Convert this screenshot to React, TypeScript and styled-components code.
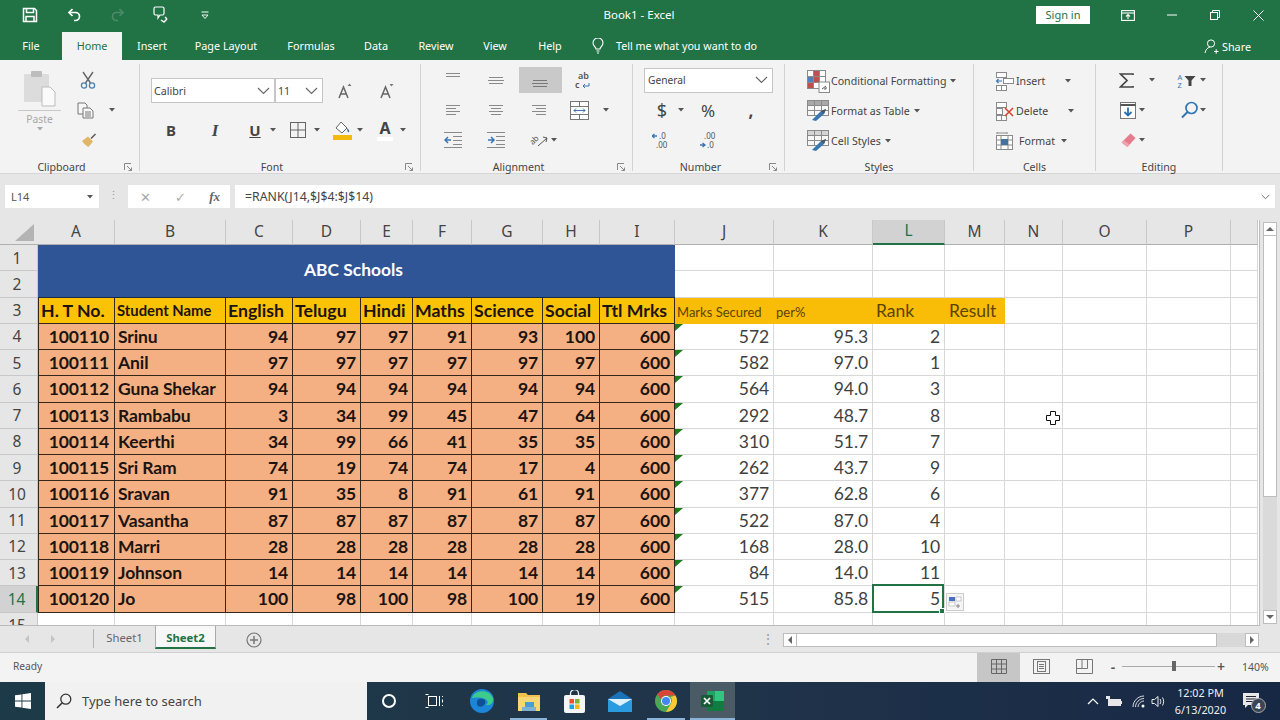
import React from "react";
import styled, { createGlobalStyle } from "styled-components";

const UI = `"Noto Sans", "Open Sans", sans-serif`;
const SHEET = `Lato, "Open Sans", sans-serif`;
const GREEN = "#217346";

const Global = createGlobalStyle`
  html, body { margin: 0; padding: 0; background: #f3f3f3; }
  * { box-sizing: border-box; }
`;

const Page = styled.div`
  width: 1280px;
  height: 720px;
  overflow: hidden;
  display: flex;
  flex-direction: column;
  font-family: ${UI};
  color: #444;
`;

/* positioned-by-centre row used for the small toolbar icons */
const ToolRow = styled.div<{ $h?: number }>`
  display: flex;
  align-items: center;
  height: ${(p) => p.$h ?? 30}px;
`;
const Slot = styled.div<{ $w: number; $ml: number }>`
  flex: none;
  width: ${(p) => p.$w}px;
  margin-left: ${(p) => p.$ml}px;
  display: flex;
  align-items: center;
  justify-content: center;
`;
type Item = [number, number, React.ReactNode];
function Tools({ from, items, h }: { from: number; items: Item[]; h?: number }) {
  let x = from;
  return (
    <ToolRow $h={h}>
      {items.map(([c, w, node], i) => {
        const ml = c - w / 2 - x;
        x = c + w / 2;
        return (
          <Slot key={i} $w={w} $ml={ml}>
            {node}
          </Slot>
        );
      })}
    </ToolRow>
  );
}

/* ---------- icons ---------- */
const Caret = ({ c = "#555" }: { c?: string }) => (
  <svg width="6" height="4" viewBox="0 0 6 4">
    <path d="M0 0h6L3 3.5z" fill={c} />
  </svg>
);
const Chevron = ({ w = 13, c = "#666" }: { w?: number; c?: string }) => (
  <svg width={w} height="8" viewBox="0 0 13 8">
    <path d="M1 1l5.5 5.5L12 1" fill="none" stroke={c} strokeWidth="1.1" />
  </svg>
);
const ChevronUp = () => (
  <svg width="11" height="7" viewBox="0 0 11 7">
    <path d="M0.5 6L5.5 1l5 5" fill="none" stroke="#777" strokeWidth="1" />
  </svg>
);
const SaveIcon = () => (
  <svg width="16" height="16" viewBox="0 0 16 16" fill="none" stroke="#fff" strokeWidth="1.5">
    <path d="M1.5 1.5h11l2 2v11h-13z" />
    <path d="M4.5 1.5v4h7v-4M4 14.5v-5h8v5" />
  </svg>
);
const UndoIcon = ({ c = "#fff", flip = false }: { c?: string; flip?: boolean }) => (
  <svg width="15" height="14" viewBox="0 0 15 14" fill="none" stroke={c} strokeWidth="1.7" style={flip ? { transform: "scaleX(-1)" } : undefined}>
    <path d="M5.5 1L2 4.5 5.5 8" />
    <path d="M2.5 4.5h6a4 4 0 0 1 0 8H7" />
  </svg>
);
const TouchIcon = () => (
  <svg width="18" height="18" viewBox="0 0 18 18" fill="none" stroke="#fff" strokeWidth="1.2">
    <path d="M2 2.5A1.5 1.5 0 0 1 3.5 1h7A1.5 1.5 0 0 1 12 2.5v5A1.5 1.5 0 0 1 10.5 9H8l-2 3V9H3.5A1.5 1.5 0 0 1 2 7.5z" />
    <path d="M9 14l3 2 3-3M13 11l2 2" strokeWidth="1.5" />
  </svg>
);
const QatIcon = () => (
  <svg width="8" height="9" viewBox="0 0 8 9">
    <path d="M0.5 1h7" stroke="#fff" strokeWidth="1" />
    <path d="M1 4h6L4 7.5z" fill="none" stroke="#fff" strokeWidth="0.9" />
  </svg>
);
const RibbonDisplayIcon = () => (
  <svg width="14" height="11" viewBox="0 0 14 11" fill="none" stroke="#fff" strokeWidth="1.1">
    <rect x="0.6" y="0.6" width="12.8" height="9.8" />
    <path d="M0.6 3h12.8" />
    <path d="M7 9V4.5M5 6.5l2-2 2 2" />
  </svg>
);
const MinIcon = () => (
  <svg width="10" height="2" viewBox="0 0 10 2">
    <path d="M0 1h10" stroke="#fff" />
  </svg>
);
const RestoreIcon = () => (
  <svg width="10" height="10" viewBox="0 0 10 10" fill="none" stroke="#fff">
    <rect x="0.5" y="2.5" width="7" height="7" />
    <path d="M2.5 2.5v-2h7v7h-2" />
  </svg>
);
const CloseIcon = () => (
  <svg width="11" height="11" viewBox="0 0 11 11" stroke="#fff" strokeWidth="1">
    <path d="M0.5 0.5l10 10M10.5 0.5l-10 10" />
  </svg>
);
const BulbIcon = () => (
  <svg width="12" height="16" viewBox="0 0 12 16" fill="none" stroke="#fff" strokeWidth="1.1">
    <path d="M4 11c0-2-3-3-3-6a5 5 0 0 1 10 0c0 3-3 4-3 6z" />
    <path d="M4.5 13h3M5 15h2" />
  </svg>
);
const ShareIcon = () => (
  <svg width="15" height="15" viewBox="0 0 15 15" fill="none" stroke="#fff" strokeWidth="1">
    <circle cx="7" cy="4.5" r="3.6" />
    <path d="M1 14c.5-3 2.5-5.5 5-6M10 12.5h4.5M12.2 10.2v4.6" />
  </svg>
);
const PasteIcon = () => (
  <svg width="33" height="37" viewBox="0 0 33 37">
    <rect x="1" y="4" width="25" height="28" rx="1" fill="#dcdcdc" />
    <rect x="8" y="1" width="11" height="6" rx="1" fill="#bdbdbd" />
    <path d="M19 17h8l5 5v14H19z" fill="#fafafa" stroke="#bbb" />
  </svg>
);
const ScissorsIcon = () => (
  <svg width="16" height="18" viewBox="0 0 16 18" fill="none">
    <path d="M3 1l7.5 11M13 1L5.5 12" stroke="#666" strokeWidth="1.4" />
    <circle cx="4" cy="14.5" r="2.6" stroke="#4f81ad" strokeWidth="1.3" />
    <circle cx="12" cy="14.5" r="2.6" stroke="#4f81ad" strokeWidth="1.3" />
  </svg>
);
const CopyIcon = () => (
  <svg width="17" height="17" viewBox="0 0 17 17" fill="#f7f7f7" stroke="#777" strokeWidth="1">
    <path d="M1 1h7l2 2v9H1z" />
    <path d="M6 6h7l3 3v7H6z" />
    <path d="M8 10h6M8 12h6M8 14h6" />
  </svg>
);
const PainterIcon = () => (
  <svg width="16" height="16" viewBox="0 0 16 16">
    <path d="M9.5 6L14 1.5l1 1L10.5 7z" fill="#555" />
    <path d="M7 4.5l5 5-4.5 5.5c-2-1-5-4-6.5-6z" fill="#e1b567" />
  </svg>
);
const GrowA = ({ up }: { up: boolean }) => (
  <svg width="16" height="16" viewBox="0 0 16 16" fill="none">
    <path d="M2 15L6.5 4 11 15M3.6 11h5.8" stroke="#666" strokeWidth="1.5" />
    <path d={up ? "M10.5 3h4L12.5 0.5z" : "M10.5 1h4L12.5 3.5z"} fill="#777" />
  </svg>
);
const BordersIcon = () => (
  <svg width="16" height="16" viewBox="0 0 16 16" fill="none" stroke="#666">
    <rect x="0.5" y="0.5" width="15" height="15" />
    <path d="M8 0.5v15M0.5 8h15" />
  </svg>
);
const FillIcon = () => (
  <svg width="19" height="20" viewBox="0 0 19 20">
    <path d="M3 8l5-6 6 6-5 5z" fill="#fff" stroke="#666" />
    <path d="M14 8c2 2 3 3 2 4-1 1-2-1-2-4z" fill="#3a76b0" />
    <rect x="0" y="15" width="19" height="5" fill="#f2b90f" />
  </svg>
);
const ColorStack = styled.div`
  display: flex;
  flex-direction: column;
  align-items: center;
  gap: 1px;
`;
const ColorBar = styled.div`
  width: 16px;
  height: 4px;
  background: #fff;
`;
const Lines = ({ rows, w = 18, c = "#8a8a8a" }: { rows: [number, number, number][]; w?: number; c?: string }) => (
  <svg width={w} height="18" viewBox={`0 0 ${w} 18`} stroke={c} strokeWidth="1">
    {rows.map(([a, b, y], i) => (
      <path key={i} d={`M${a} ${y}.5H${b}`} />
    ))}
  </svg>
);
const WrapIcon = () => (
  <svg width="18" height="22" viewBox="0 0 18 22" fontFamily={UI} fontSize="9" fontWeight="600" fill="#555">
    <text x="4" y="10">ab</text>
    <text x="1" y="19">c</text>
    <path d="M15 14v3H9M11 15l-2 2 2 2" fill="none" stroke="#3a76b0" />
  </svg>
);
const MergeIcon = () => (
  <svg width="19" height="19" viewBox="0 0 19 19" fill="#fff" stroke="#777">
    <rect x="0.5" y="0.5" width="18" height="18" />
    <path d="M0.5 5.5h18M0.5 13.5h18M9.5 0.5v5M9.5 13.5v5" />
    <path d="M4 9.5h11M6 7.5l-2 2 2 2M13 7.5l2 2-2 2" stroke="#3a76b0" fill="none" />
  </svg>
);
const IndentIcon = ({ out }: { out: boolean }) => (
  <svg width="18" height="16" viewBox="0 0 18 16" stroke="#8a8a8a">
    <path d="M0 0.5h18M9 4.5h9M9 8.5h9M9 12.5h9M0 15.5h18" />
    <path d={out ? "M7 8H1M4 5L1 8l3 3" : "M1 8h6M4 5l3 3-3 3"} stroke="#3a76b0" strokeWidth="1.5" fill="none" />
  </svg>
);
const OrientIcon = () => (
  <svg width="26" height="24" viewBox="0 0 26 24">
    <text x="11" y="14" fontFamily={UI} fontSize="8" fill="#555" transform="rotate(-45 11 14)" textAnchor="middle">ab</text>
    <path d="M13 18L22 10M18 9l4 1-1 4" fill="none" stroke="#555" />
  </svg>
);
const DecimalIcon = ({ more }: { more: boolean }) => (
  <svg width="18" height="22" viewBox="0 0 18 22" fontFamily={UI} fontSize="8" fill="#555">
    <text x={more ? 7 : 4} y="10">{more ? ".0" : ".00"}</text>
    <text x={more ? 4 : 7} y="19">{more ? ".00" : ".0"}</text>
    <path d={more ? "M0 7h5M2.5 5L0 7l2.5 2" : "M0 16h5M2.5 14L5 16l-2.5 2"} fill="none" stroke="#3a76b0" strokeWidth="1.3" />
  </svg>
);
const CondIcon = () => (
  <svg width="23" height="23" viewBox="0 0 23 23" stroke="#8a8a8a" fill="#fff">
    <rect x="0.5" y="0.5" width="18" height="18" />
    <path d="M6.5 0.5v18M12.5 0.5v18M0.5 6.5h18M0.5 12.5h18" />
    <rect x="7" y="1" width="5" height="5" fill="#c0504d" stroke="none" />
    <rect x="1" y="7" width="5" height="5" fill="#4f81bd" stroke="none" />
    <rect x="7" y="7" width="5" height="5" fill="#c0504d" stroke="none" />
    <rect x="1" y="13" width="5" height="5" fill="#c0504d" stroke="none" />
    <rect x="12" y="12" width="10.5" height="10.5" />
    <path d="M15 19l4-3M17 19h2v-2" fill="none" stroke="#555" />
  </svg>
);
const TableStyleIcon = ({ head = "#a8a8a8" }: { head?: string }) => (
  <svg width="23" height="22" viewBox="0 0 23 22" stroke="#8a8a8a" fill="#f8f8f8">
    <rect x="0.5" y="0.5" width="21" height="15" />
    <rect x="1" y="1" width="20" height="4" fill={head} stroke="none" />
    <path d="M0.5 5.5h21M0.5 10.5h21M7.5 0.5v15M14.5 0.5v15" />
    <path d="M5 20l9-9 5-2-2 5-8 7z" fill="#3a76b0" stroke="none" />
    <path d="M14 11l5-2-2 5z" fill="#555" stroke="none" />
  </svg>
);
const InsertCells = () => (
  <svg width="18" height="19" viewBox="0 0 18 19" stroke="#8a8a8a" fill="#fff">
    <rect x="0.5" y="0.5" width="10" height="5" />
    <rect x="0.5" y="13.5" width="5" height="5" />
    <rect x="5.5" y="13.5" width="5" height="5" />
    <rect x="7.5" y="6.5" width="10" height="5" />
    <path d="M0 9h6M2.5 7L0.5 9l2 2" fill="none" stroke="#3a76b0" strokeWidth="1.2" />
  </svg>
);
const DeleteCells = () => (
  <svg width="18" height="19" viewBox="0 0 18 19" stroke="#8a8a8a" fill="#fff">
    <rect x="0.5" y="0.5" width="10" height="5" />
    <rect x="0.5" y="6.5" width="6" height="6" />
    <rect x="0.5" y="13.5" width="5" height="5" />
    <rect x="5.5" y="13.5" width="5" height="5" />
    <path d="M9 6l8 8M17 6l-8 8" stroke="#d8452f" strokeWidth="1.6" />
  </svg>
);
const FormatCells = () => (
  <svg width="18" height="19" viewBox="0 0 18 19" stroke="#8a8a8a" fill="#fff">
    <path d="M1 1h10M1 0v2M11 0v2" />
    <rect x="0.5" y="3.5" width="16" height="14" />
    <path d="M0.5 8h16M0.5 13h16M5 3.5v14M12 3.5v14" />
    <rect x="5" y="7" width="7" height="6" fill="#44719e" stroke="none" />
  </svg>
);
const SumIcon = () => (
  <svg width="15" height="15" viewBox="0 0 15 15" fill="none" stroke="#444" strokeWidth="1.7">
    <path d="M14 2V1H1.5L8 7.5 1.5 14H14v-1" />
  </svg>
);
const SortIcon = () => (
  <svg width="20" height="17" viewBox="0 0 20 17">
    <text x="0.5" y="8" fontFamily={UI} fontSize="7.5" fill="#3a76b0">A</text>
    <text x="0.5" y="15.5" fontFamily={UI} fontSize="7.5" fill="#3a76b0">Z</text>
    <path d="M7.5 4h11l-4 4.5V14h-3V8.5z" fill="#444" />
  </svg>
);
const FillDownIcon = () => (
  <svg width="16" height="17" viewBox="0 0 16 17" fill="#fff" stroke="#777">
    <rect x="0.5" y="0.5" width="15" height="16" />
    <path d="M0.5 3h15" strokeWidth="2" stroke="#555" />
    <path d="M8 5.5v8M4.5 10L8 13.5 11.5 10" fill="none" stroke="#2a6fb0" strokeWidth="1.8" />
  </svg>
);
const FindIcon = () => (
  <svg width="18" height="18" viewBox="0 0 18 18" fill="none" stroke="#2f75b5" strokeWidth="1.7">
    <circle cx="10.5" cy="7" r="5.5" />
    <path d="M6.5 11L1 16.5" strokeWidth="2" />
  </svg>
);
const EraserIcon = () => (
  <svg width="16" height="15" viewBox="0 0 16 15">
    <path d="M10.5 0.5l5 4.5-8 9-6-4.5z" fill="#e57b8d" />
    <path d="M4 7.5l5.5 4-2 2.5-6-4.5z" fill="#f0a3af" />
  </svg>
);
const Launcher = () => (
  <svg width="8" height="8" viewBox="0 0 8 8" fill="none" stroke="#888">
    <path d="M0.5 7V0.5H7M3 3l4.5 4.5M7.5 4.5v3h-3" />
  </svg>
);
const QuickIcon = () => (
  <svg width="18" height="18" viewBox="0 0 18 18">
    <rect x="0.5" y="0.5" width="17" height="17" fill="#f5f5f5" stroke="#ccc" />
    <rect x="3" y="4" width="6" height="4" fill="#4b6fc0" />
    <rect x="10" y="4" width="5" height="4" fill="#fff" stroke="#aaa" strokeWidth="0.6" />
    <rect x="3" y="9" width="6" height="4" fill="#fff" stroke="#aaa" strokeWidth="0.6" />
    <path d="M12 11v4M10 13h4" stroke="#888" />
  </svg>
);
const PlusCursor = () => (
  <svg width="14" height="14" viewBox="0 0 14 14">
    <path d="M4.5 0.5h5v4h4v5h-4v4h-5v-4h-4v-5h4z" fill="#fff" stroke="#111" />
  </svg>
);
const Arrow = ({ d, c = "#666" }: { d: "l" | "r" | "u" | "d"; c?: string }) => {
  const paths = { l: "M5 0v8L1 4z", r: "M1 0v8l4-4z", u: "M0 5h8L4 1z", d: "M0 1h8L4 5z" };
  return (
    <svg width={d === "l" || d === "r" ? 6 : 8} height={d === "l" || d === "r" ? 8 : 6} viewBox={d === "l" || d === "r" ? "0 0 6 8" : "0 0 8 6"}>
      <path d={paths[d]} fill={c} />
    </svg>
  );
};
const AddSheetIcon = () => (
  <svg width="16" height="16" viewBox="0 0 16 16" fill="none" stroke="#777" strokeWidth="1.2">
    <circle cx="8" cy="8" r="7" />
    <path d="M8 4v8M4 8h8" strokeWidth="1.5" />
  </svg>
);
const NormalView = () => (
  <svg width="16" height="15" viewBox="0 0 16 15" fill="none" stroke="#666">
    <path d="M0.5 0.5h15v14h-15zM5.5 0.5v14M10.5 0.5v14M0.5 5h15M0.5 10h15" />
  </svg>
);
const PageView = () => (
  <svg width="17" height="15" viewBox="0 0 17 15" fill="none" stroke="#777">
    <rect x="0.5" y="0.5" width="16" height="14" />
    <rect x="4.5" y="2.5" width="8" height="10" />
    <path d="M6 5.5h5M6 7.5h5M6 9.5h5" />
  </svg>
);
const BreakView = () => (
  <svg width="17" height="15" viewBox="0 0 17 15" fill="none" stroke="#777">
    <path d="M0.5 0.5h16v14h-16zM0.5 9.5h11v-9M6 0.5v9" />
  </svg>
);

/* taskbar */
const WinLogo = () => (
  <svg width="16" height="16" viewBox="0 0 16 16" fill="#fff">
    <path d="M0 2.3l6.5-.9V7.500H0zM7.400 1.300L16 0v7.500H7.400zM0 8.400h6.500v6.200L0 13.700zM7.400 8.400H16V16l-8.600-1.200z" />
  </svg>
);
const SearchGlass = () => (
  <svg width="16" height="16" viewBox="0 0 16 16" fill="none" stroke="#333" strokeWidth="1.3">
    <circle cx="9.8" cy="6.2" r="5" />
    <path d="M6 10L1 15" strokeWidth="1.6" />
  </svg>
);
const CortanaIcon = () => (
  <svg width="14" height="14" viewBox="0 0 14 14" fill="none" stroke="#fff" strokeWidth="2">
    <circle cx="7" cy="7" r="6" />
  </svg>
);
const TaskViewIcon = () => (
  <svg width="18" height="14" viewBox="0 0 18 14" fill="none" stroke="#fff">
    <rect x="3.5" y="2.5" width="8" height="9" />
    <path d="M0.5 0.5h3M0.5 13.5h3M14.5 2v10M17.5 2v1M17.5 5.5v3M17.5 11v1" />
  </svg>
);
const EdgeIcon = () => (
  <svg width="24" height="24" viewBox="0 0 24 24">
    <circle cx="12" cy="12" r="12" fill="#1b86d8" />
    <path d="M2 9C4 1 19-1 23 9c1 5-3 8-7 7 3-2 2-6-4-7C7 8 3 9 2 9z" fill="#3dca8c" />
    <path d="M7 13c0-3 3-4 6-3 3 1 3 4 1 6-3 3-8 2-7-3z" fill="#0f4f92" />
  </svg>
);
const FolderIcon = () => (
  <svg width="22" height="19" viewBox="0 0 22 19">
    <path d="M0 1h8l2 2h12v16H0z" fill="#f0c24b" />
    <rect x="0" y="5" width="22" height="14" fill="#f7d774" />
    <rect x="7" y="10" width="9" height="6" fill="#4c9ad6" />
    <rect x="4" y="15" width="14" height="4" fill="#7fb0d6" />
  </svg>
);
const StoreIcon = () => (
  <svg width="23" height="23" viewBox="0 0 23 23">
    <path d="M7.5 6V3.5a4 4 0 0 1 8 0V6" fill="none" stroke="#eee" strokeWidth="1.3" />
    <rect x="1" y="5" width="21" height="18" rx="2" fill="#f5f5f5" />
    <rect x="6.5" y="9" width="4.5" height="4.5" fill="#e8542a" />
    <rect x="12" y="9" width="4.5" height="4.5" fill="#7ab829" />
    <rect x="6.5" y="14.5" width="4.5" height="4.5" fill="#1ea2e4" />
    <rect x="12" y="14.5" width="4.5" height="4.5" fill="#f5b80b" />
  </svg>
);
const MailIcon = () => (
  <svg width="24" height="21" viewBox="0 0 24 21">
    <path d="M0 8L12 0l12 8v13H0z" fill="#1a73b8" />
    <rect x="0" y="8" width="24" height="13" fill="#2b9be0" />
    <path d="M0 8l12 7 12-7" fill="#dff1fb" />
  </svg>
);
const ChromeIcon = () => (
  <svg width="22" height="22" viewBox="0 0 22 22">
    <circle cx="11" cy="11" r="11" fill="#4aa757" />
    <path d="M11 0a11 11 0 0 1 9.5 5.5H11A5.5 5.5 0 0 0 5.8 9.3L2.3 4.3A11 11 0 0 1 11 0z" fill="#dc4437" />
    <path d="M20.5 5.5A11 11 0 0 1 11 22l4.8-8.2A5.5 5.5 0 0 0 15.5 7z" fill="#fcc934" />
    <circle cx="11" cy="11" r="5" fill="#fff" />
    <circle cx="11" cy="11" r="4" fill="#4285f4" />
  </svg>
);
const ExcelIcon = () => (
  <svg width="23" height="20" viewBox="0 0 23 20">
    <rect x="6" y="0" width="17" height="20" rx="1" fill="#21a366" />
    <rect x="6" y="10" width="17" height="10" fill="#107c41" />
    <rect x="14" y="0" width="9" height="10" fill="#33c481" />
    <rect x="0" y="4" width="12" height="12" rx="1" fill="#185c37" />
    <path d="M3 7l6 6M9 7l-6 6" stroke="#fff" strokeWidth="1.7" />
  </svg>
);
const TrayChevron = () => (
  <svg width="12" height="7" viewBox="0 0 12 7" fill="none" stroke="#fff" strokeWidth="1.2">
    <path d="M1 6l5-5 5 5" />
  </svg>
);
const BatteryIcon = () => (
  <svg width="16" height="11" viewBox="0 0 16 11" fill="#e8e8e8">
    <rect x="0" y="0" width="4" height="3" />
    <rect x="2" y="3" width="13" height="7" />
    <rect x="15" y="5" width="1" height="3" />
  </svg>
);
const WifiIcon = () => (
  <svg width="13" height="13" viewBox="0 0 13 13" fill="none" stroke="#ddd">
    <path d="M1 12C1 6 6 1 12 1M3.5 12c0-4.5 4-8.5 8.5-8.5M6 12c0-3 3-6 6-6" />
    <circle cx="11" cy="11" r="1.5" fill="#fff" stroke="none" />
  </svg>
);
const VolumeIcon = () => (
  <svg width="15" height="13" viewBox="0 0 15 13" fill="none" stroke="#eee">
    <path d="M1 4.5h2.5L7 1.5v10l-3.500-3H1z" />
    <path d="M9 4c1 1.500 1 3.500 0 5M11.500 2.500c1.500 2.500 1.500 5.500 0 8" />
  </svg>
);
const NoteIcon = () => (
  <svg width="16" height="16" viewBox="0 0 16 16" fill="#e8e8e8">
    <path d="M0 0h16v12H5l-3 3v-3H0z" />
    <path d="M3 3.5h10M3 6h10M3 8.5h7" stroke="#223" strokeWidth="1" />
  </svg>
);

/* ---------- title + tabs ---------- */
const TitleBar = styled.div`
  height: 30px;
  flex: none;
  background: ${GREEN};
  display: grid;
  grid-template-columns: 560px 160px 560px;
  align-items: center;
`;
const Title = styled.div`
  color: #fff;
  font-size: 11.5px;
  text-align: center;
  padding: 0 2px 2px 0;
`;
const SignIn = styled.div`
  width: 54px;
  height: 18px;
  background: #fff;
  color: ${GREEN};
  font-size: 11px;
  line-height: 17px;
  text-align: center;
`;
const TabBar = styled.div`
  height: 30px;
  flex: none;
  background: ${GREEN};
  display: flex;
  align-items: flex-end;
`;
const Tab = styled.div<{ $w: number; $active?: boolean }>`
  width: ${(p) => p.$w}px;
  height: 28px;
  line-height: 28px;
  text-align: center;
  font-size: 10.8px;
  color: ${(p) => (p.$active ? GREEN : "#fff")};
  background: ${(p) => (p.$active ? "#f3f3f3" : "transparent")};
`;
const TellMe = styled.div`
  display: flex;
  align-items: center;
  height: 28px;
  margin-left: 10px;
  gap: 12px;
  font-size: 10.7px;
  color: #fff;
`;
const ShareBox = styled.div`
  margin-left: auto;
  margin-right: 29px;
  height: 28px;
  display: flex;
  align-items: center;
  gap: 3px;
  font-size: 10.8px;
  color: #fff;
`;

/* ---------- ribbon ---------- */
const Ribbon = styled.div`
  height: 114px;
  flex: none;
  background: #f3f3f3;
  border-bottom: 1px solid #d6d6d6;
  padding-top: 4px;
  display: flex;
  align-items: flex-start;
`;
const Group = styled.div<{ $w: number }>`
  flex: none;
  width: ${(p) => p.$w}px;
  height: 107px;
  border-right: 1px solid #d2d2d2;
  display: flex;
  flex-direction: column;
`;
const GroupBody = styled.div`
  flex: 1;
  padding-top: 1px;
  min-height: 0;
`;
const GroupFoot = styled.div`
  height: 16px;
  display: flex;
  align-items: center;
  font-size: 10.6px;
  color: #444;
  transform: translateY(4px);
`;
const FootLabel = styled.div`
  flex: 1;
  text-align: center;
`;
const FootLauncher = styled.div`
  flex: none;
  width: 16px;
  display: flex;
  justify-content: flex-end;
  padding-right: 7px;
`;
const ClipBody = styled.div`
  display: flex;
`;
const PasteCol = styled.div`
  margin-left: 18px;
  margin-top: 5px;
  width: 43px;
  display: flex;
  flex-direction: column;
  align-items: center;
  color: #a8a8a8;
  font-size: 10.3px;
  line-height: 15px;
`;
const PasteRule = styled.div`
  width: 43px;
  height: 1px;
  background: #c8c8c8;
  margin: 3px 0 1px;
`;
const ComboRow = styled.div`
  display: flex;
  margin: 13px 0 0 11px;
`;
const Combo = styled.div<{ $w: number }>`
  width: ${(p) => p.$w}px;
  height: 25px;
  background: #fff;
  border: 1px solid #c6c6c6;
  display: flex;
  align-items: center;
  justify-content: space-between;
  padding: 0 4px 0 2px;
  font-size: 10.7px;
  color: #444;
`;
const FontToolRow = styled.div`
  margin-top: 12px;
`;
const Glyph = styled.span<{ $italic?: boolean; $under?: boolean; $size?: number; $bold?: boolean; $family?: string }>`
  font-family: ${(p) => p.$family ?? UI};
  font-size: ${(p) => p.$size ?? 15}px;
  font-weight: ${(p) => (p.$bold === false ? 400 : 700)};
  font-style: ${(p) => (p.$italic ? "italic" : "normal")};
  text-decoration: ${(p) => (p.$under ? "underline" : "none")};
  color: #444;
  line-height: 1;
`;
const Pressed = styled.div`
  width: 43px;
  height: 26px;
  background: #c9c9c9;
  display: flex;
  align-items: center;
  justify-content: center;
`;
const GeneralBox = styled(Combo)`
  margin-left: 11px;
  padding: 0 4px 0 3px;
  font-size: 10.2px;
`;
const NumberTop = styled.div`
  height: 30px;
  display: flex;
  align-items: center;
`;
const StyleRow = styled.div<{ $gap?: number; $left: number }>`
  height: 30px;
  padding-top: 2px;
  display: flex;
  align-items: center;
  margin-left: ${(p) => p.$left}px;
  gap: ${(p) => p.$gap ?? 1}px;
  font-size: 10.6px;
  color: #444;
`;
const CaretAfter = styled.span<{ $gap?: number }>`
  display: inline-flex;
  margin-left: ${(p) => p.$gap ?? 3}px;
`;
const Collapse = styled.div`
  margin-left: 32px;
  margin-top: 100px;
`;

/* ---------- formula bar ---------- */
const FormulaRow = styled.div`
  height: 46px;
  flex: none;
  background: #e6e6e6;
  padding: 11px 5px 0 5px;
  display: flex;
  align-items: flex-start;
`;
const NameBox = styled.div`
  width: 94px;
  height: 23px;
  background: #fff;
  font-size: 11px;
  padding: 0 6px;
  display: flex;
  align-items: center;
  justify-content: space-between;
  color: #555;
`;
const Grip = styled.div`
  width: 29px;
  text-align: center;
  font-size: 11px;
  line-height: 20px;
  color: #999;
`;
const FxBox = styled.div`
  width: 102px;
  height: 23px;
  background: #fff;
  display: flex;
  align-items: center;
  justify-content: space-between;
  padding: 0 10px 0 12px;
  font-size: 13px;
  color: #aaa;
`;
const FxMark = styled.span`
  font-family: "Liberation Serif", serif;
  font-style: italic;
  font-weight: 700;
  font-size: 13px;
  color: #666;
`;
const FormulaInput = styled.div`
  margin-left: 5px;
  flex: 1;
  height: 23px;
  background: #fff;
  padding: 0 5px 0 10px;
  font-size: 12.3px;
  color: #444;
  display: flex;
  align-items: center;
  justify-content: space-between;
`;

/* ---------- sheet ---------- */
const SheetArea = styled.div`
  height: 406px;
  flex: none;
  display: flex;
  position: relative;
  background: #e6e6e6;
`;
const COLS = [38, 77, 111, 67, 68, 52, 59, 71, 57, 75, 99, 99, 72, 60, 58, 84, 84, 27];
const Sheet = styled.div`
  width: 1260px;
  height: 406px;
  overflow: hidden;
  display: grid;
  grid-template-columns: ${COLS.map((c) => c + "px").join(" ")};
  grid-template-rows: 25px repeat(15, 26.25px);
  border-right: 1px solid #bbb;
  border-bottom: 1px solid #bbb;
  background: #fff;
`;
const Corner = styled.div`
  background: #e6e6e6;
  border-bottom: 1px solid #b0b0b0;
  display: flex;
  align-items: flex-end;
  justify-content: flex-end;
  padding: 0 4px 3px 0;
`;
const ColHead = styled.div<{ $on?: boolean }>`
  background: ${(p) => (p.$on ? "#d2d2d2" : "#e6e6e6")};
  border-right: 1px solid #c8c8c8;
  border-bottom: ${(p) => (p.$on ? `2px solid ${GREEN}` : "1px solid #b0b0b0")};
  color: ${(p) => (p.$on ? GREEN : "#444")};
  font-size: 15.5px;
  display: flex;
  align-items: center;
  justify-content: center;
  padding-bottom: 3px;
`;
const RowHead = styled.div<{ $on?: boolean }>`
  background: ${(p) => (p.$on ? "#d2d2d2" : "#e6e6e6")};
  border-bottom: 1px solid #c8c8c8;
  border-right: ${(p) => (p.$on ? `2px solid ${GREEN}` : "1px solid #c8c8c8")};
  color: ${(p) => (p.$on ? GREEN : "#444")};
  font-size: 15.5px;
  display: flex;
  align-items: center;
  justify-content: center;
  padding-right: 3px;
`;
const Cell = styled.div`
  position: relative;
  border-right: 1px solid #d8d8d8;
  border-bottom: 1px solid #d8d8d8;
  font-family: ${SHEET};
  font-size: 17.5px;
  color: #3f3f3f;
  display: flex;
  align-items: center;
  justify-content: flex-end;
  padding: 0 4px;
  white-space: nowrap;
  letter-spacing: -0.1px;
`;
const ErrorCell = styled(Cell)`
  &::before {
    content: "";
    position: absolute;
    left: 0;
    top: 0;
    border-top: 7px solid #1e7b1e;
    border-right: 8px solid transparent;
  }
`;
const Banner = styled.div`
  grid-column: span 9;
  grid-row: span 2;
  background: #2f5597;
  border-bottom: 1px solid #1d2b40;
  color: #fff;
  font-family: ${SHEET};
  font-weight: 700;
  font-size: 17.4px;
  display: flex;
  align-items: center;
  justify-content: center;
  padding: 0 6px 2px 0;
`;
const MarkCell = styled(Cell)<{ $first?: boolean }>`
  background: #f4b082;
  border-color: #35261a;
  border-left: ${(p) => (p.$first ? "1px solid #35261a" : "none")};
  padding-right: ${(p) => (p.$first ? 5 : 4)}px;
  color: #1c1410;
  font-weight: 700;
`;
const NameCell = styled(MarkCell)`
  justify-content: flex-start;
  padding: 0 3px;
`;
const HeadCell = styled(NameCell)<{ $small?: boolean }>`
  background: #fcc206;
  font-weight: 700;
  font-size: ${(p) => (p.$small ? 14.8 : 17.7)}px;
  letter-spacing: 0;
  padding: 0 2px;
`;
const BandCell = styled(Cell)<{ $small?: boolean; $pad?: number }>`
  background: #f9bc07;
  border-color: #f9bc07;
  justify-content: flex-start;
  padding: ${(p) => (p.$small ? 3 : 1)}px 0 0 ${(p) => p.$pad ?? 2}px;
  color: #5a4400;
  font-size: ${(p) => (p.$small ? 13 : 17.5)}px;
  letter-spacing: 0;
`;
const ActiveFrame = styled.div`
  position: absolute;
  inset: -2px 0 -1px -1px;
  border: 2px solid ${GREEN};
`;
const FillHandle = styled.div`
  position: absolute;
  right: -3px;
  bottom: -3px;
  width: 6px;
  height: 6px;
  background: ${GREEN};
  border: 1px solid #fff;
`;
const QuickBadge = styled.div`
  position: absolute;
  left: 72px;
  top: 7px;
  width: 18px;
  height: 18px;
`;
const VScroll = styled.div`
  width: 20px;
  padding: 2px 3px 2px 3px;
  display: flex;
  flex-direction: column;
`;
const ScrollBtn = styled.div`
  flex: none;
  width: 14px;
  height: 14px;
  background: #fff;
  border: 1px solid #bdbdbd;
  display: flex;
  align-items: center;
  justify-content: center;
`;
const VThumb = styled.div`
  width: 14px;
  height: 261px;
  flex: none;
  background: #fff;
  border: 1px solid #bdbdbd;
  border-top: none;
`;
const VTrack = styled.div`
  flex: 1;
  background: #dadada;
`;
const MouseCursor = styled.div`
  position: absolute;
  left: 1046px;
  top: 191px;
  width: 14px;
  height: 14px;
  transform: translateY(-3px);
`;

/* ---------- sheet tabs ---------- */
const SheetTabs = styled.div`
  height: 27px;
  flex: none;
  background: #e6e6e6;
  display: flex;
  align-items: flex-start;
  border-bottom: 1px solid #d0d0d0;
`;
const NavArrows = styled.div`
  width: 94px;
  height: 19px;
  margin-top: 3px;
  border-right: 1px solid #b5b5b5;
`;
const SheetTab = styled.div<{ $on?: boolean }>`
  width: 61px;
  height: 23px;
  line-height: 23px;
  text-align: center;
  font-size: 11.3px;
  font-weight: ${(p) => (p.$on ? 700 : 400)};
  color: ${(p) => (p.$on ? GREEN : "#666")};
  background: ${(p) => (p.$on ? "#f7f7f7" : "transparent")};
  border-left: ${(p) => (p.$on ? "1px solid #aaa" : "none")};
  border-right: ${(p) => (p.$on ? "1px solid #aaa" : "none")};
  border-bottom: ${(p) => (p.$on ? `2px solid ${GREEN}` : "none")};
`;
const AddSheet = styled.div`
  width: 16px;
  height: 16px;
  margin: 5px 0 0 30px;
`;
const SplitDots = styled.div`
  margin-left: 498px;
  color: #a0a0a0;
  font-size: 14px;
  line-height: 26px;
  width: 16px;
  text-align: center;
`;
const HScroll = styled.div`
  display: flex;
  width: 476px;
  margin: 7px 0 0 7px;
`;
const HThumb = styled.div`
  width: 420px;
  height: 14px;
  flex: none;
  background: #fff;
  border: 1px solid #bdbdbd;
  border-left: none;
`;
const HTrack = styled.div`
  flex: 1;
  height: 14px;
  background: #d8d8d8;
`;

/* ---------- status ---------- */
const StatusBar = styled.div`
  height: 29px;
  flex: none;
  background: #f3f3f3;
  display: flex;
  align-items: center;
  font-size: 10.2px;
  color: #555;
  padding-left: 13px;
`;
const Ready = styled.span`
  padding-bottom: 3px;
`;
const ViewBtn = styled.div<{ $on?: boolean }>`
  width: 43px;
  height: 29px;
  padding-bottom: 2px;
  background: ${(p) => (p.$on ? "#c6c6c6" : "transparent")};
  display: flex;
  align-items: center;
  justify-content: center;
`;
const Views = styled.div`
  margin-left: auto;
  display: flex;
`;
const ZoomBar = styled.div`
  margin: 0 0 2px 3px;
  width: 93px;
  height: 1px;
  background: #aaa;
  position: relative;
`;
const ZoomThumb = styled.div`
  position: absolute;
  left: 50px;
  top: -5px;
  width: 4px;
  height: 10px;
  background: #666;
`;
const ZoomSign = styled.div<{ $ml?: number }>`
  font-size: 14px;
  font-weight: 600;
  color: #555;
  width: 12px;
  margin-left: ${(p) => p.$ml ?? 0}px;
  text-align: center;
  padding-bottom: 3px;
`;
const ZoomValue = styled.div`
  width: 38px;
  margin-left: 15px;
  padding-bottom: 2px;
  font-size: 10.5px;
  color: #555;
`;

/* ---------- taskbar ---------- */
const Taskbar = styled.div`
  height: 38px;
  flex: none;
  background: linear-gradient(90deg, #1c3a47 0%, #20344a 55%, #172845 100%);
  display: flex;
  align-items: stretch;
`;
const StartBtn = styled.div`
  width: 45px;
  display: flex;
  align-items: center;
  justify-content: center;
`;
const SearchBox = styled.div`
  width: 322px;
  background: #f1f1f1;
  display: flex;
  align-items: center;
  padding-left: 11px;
  gap: 10px;
  font-size: 13px;
  color: #444;
`;
const TaskBtn = styled.div<{ $w: number; $on?: boolean; $open?: boolean; $ml?: number }>`
  flex: none;
  width: ${(p) => p.$w}px;
  margin-left: ${(p) => p.$ml ?? 0}px;
  background: ${(p) => (p.$on ? "#4b5b66" : "transparent")};
  box-shadow: ${(p) => (p.$open ? "inset 0 -2px 0 #8ab4d8" : "none")};
  display: flex;
  align-items: center;
  justify-content: center;
`;
const Tray = styled.div`
  margin-left: auto;
  display: flex;
  align-items: center;
  color: #f0f0f0;
`;
const Clock = styled.div`
  width: 66px;
  text-align: center;
  font-size: 10.8px;
  line-height: 17px;
  margin-left: 2px;
`;
const NoteBtn = styled.div`
  position: relative;
  width: 30px;
  margin-left: 2px;
  margin-right: 14.5px;
  display: flex;
  justify-content: center;
`;
const NoteBadge = styled.div`
  position: absolute;
  left: 15px;
  top: 5px;
  width: 15px;
  height: 15px;
  border-radius: 50%;
  background: #3a4656;
  border: 1px solid #aaa;
  color: #fff;
  font-size: 9.5px;
  font-weight: 700;
  line-height: 13px;
  text-align: center;
`;

/* ---------- data ---------- */
const LETTERS = "ABCDEFGHIJKLMNOP".split("");
const HEADS = ["English", "Telugu", "Hindi", "Maths", "Science", "Social", "Ttl Mrks"];
const STUDENTS: [number, string, number[], number, string, number][] = [
  [100110, "Srinu", [94, 97, 97, 91, 93, 100], 572, "95.3", 2],
  [100111, "Anil", [97, 97, 97, 97, 97, 97], 582, "97.0", 1],
  [100112, "Guna Shekar", [94, 94, 94, 94, 94, 94], 564, "94.0", 3],
  [100113, "Rambabu", [3, 34, 99, 45, 47, 64], 292, "48.7", 8],
  [100114, "Keerthi", [34, 99, 66, 41, 35, 35], 310, "51.7", 7],
  [100115, "Sri Ram", [74, 19, 74, 74, 17, 4], 262, "43.7", 9],
  [100116, "Sravan", [91, 35, 8, 91, 61, 91], 377, "62.8", 6],
  [100117, "Vasantha", [87, 87, 87, 87, 87, 87], 522, "87.0", 4],
  [100118, "Marri", [28, 28, 28, 28, 28, 28], 168, "28.0", 10],
  [100119, "Johnson", [14, 14, 14, 14, 14, 14], 84, "14.0", 11],
  [100120, "Jo", [100, 98, 100, 98, 100, 19], 515, "85.8", 5],
];

const blanks = (n: number, key: string) => Array.from({ length: n }, (_, i) => <Cell key={key + i} />);

function SheetGrid() {
  const out: React.ReactNode[] = [];
  out.push(
    <Corner key="corner">
      <svg width="19" height="17" viewBox="0 0 19 17">
        <path d="M19 0v17H0z" fill="#b4b4b4" />
      </svg>
    </Corner>
  );
  LETTERS.forEach((l) =>
    out.push(
      <ColHead key={l} $on={l === "L"}>
        {l}
      </ColHead>
    )
  );
  out.push(<ColHead key="Q" />);

  out.push(<RowHead key="r1">1</RowHead>);
  out.push(<Banner key="banner">ABC Schools</Banner>);
  out.push(...blanks(8, "a"));
  out.push(<RowHead key="r2">2</RowHead>);
  out.push(...blanks(8, "b"));

  out.push(<RowHead key="r3">3</RowHead>);
  out.push(
    <HeadCell key="h0" $first>
      H. T No.
    </HeadCell>
  );
  out.push(
    <HeadCell key="h1" $small>
      Student Name
    </HeadCell>
  );
  HEADS.forEach((h) => out.push(<HeadCell key={h}>{h}</HeadCell>));
  out.push(
    <BandCell key="b1" $small>
      Marks Secured
    </BandCell>,
    <BandCell key="b2" $small>
      per%
    </BandCell>,
    <BandCell key="b3" $pad={3}>
      Rank
    </BandCell>,
    <BandCell key="b4" $pad={4}>
      Result
    </BandCell>
  );
  out.push(...blanks(4, "c"));

  STUDENTS.forEach(([id, name, marks, sum, per, rank], i) => {
    const n = i + 4;
    const last = n === 14;
    out.push(
      <RowHead key={"r" + n} $on={last}>
        {n}
      </RowHead>,
      <MarkCell key={"id" + n} $first>
        {id}
      </MarkCell>,
      <NameCell key={"nm" + n}>{name}</NameCell>
    );
    marks.forEach((m, j) => out.push(<MarkCell key={`m${n}-${j}`}>{m}</MarkCell>));
    out.push(
      <MarkCell key={"t" + n}>600</MarkCell>,
      <ErrorCell key={"s" + n}>{sum}</ErrorCell>,
      <Cell key={"p" + n}>{per}</Cell>,
      <Cell key={"k" + n}>
        {rank}
        {last && (
          <ActiveFrame>
            <FillHandle />
            <QuickBadge>
              <QuickIcon />
            </QuickBadge>
          </ActiveFrame>
        )}
      </Cell>
    );
    out.push(...blanks(5, "x" + n));
  });

  out.push(<RowHead key="r15">15</RowHead>);
  out.push(...blanks(17, "z"));
  return <Sheet>{out}</Sheet>;
}

export default function App() {
  return (
    <Page>
      <Global />
      <TitleBar>
        <Tools
          from={0}
          items={[
            [30, 16, <SaveIcon />],
            [74, 15, <UndoIcon />],
            [117, 15, <UndoIcon c="#4c8a68" flip />],
            [161, 18, <TouchIcon />],
            [205, 8, <QatIcon />],
          ]}
        />
        <Title>Book1 - Excel</Title>
        <Tools
          from={720}
          items={[
            [1063, 54, <SignIn>Sign in</SignIn>],
            [1128, 14, <RibbonDisplayIcon />],
            [1172, 10, <MinIcon />],
            [1215, 10, <RestoreIcon />],
            [1258, 11, <CloseIcon />],
          ]}
        />
      </TitleBar>
      <TabBar>
        <Tab $w={62}>File</Tab>
        <Tab $w={60} $active>
          Home
        </Tab>
        <Tab $w={60}>Insert</Tab>
        <Tab $w={88}>Page Layout</Tab>
        <Tab $w={82}>Formulas</Tab>
        <Tab $w={48}>Data</Tab>
        <Tab $w={72}>Review</Tab>
        <Tab $w={46}>View</Tab>
        <Tab $w={64}>Help</Tab>
        <TellMe>
          <BulbIcon />
          <span>Tell me what you want to do</span>
        </TellMe>
        <ShareBox>
          <ShareIcon />
          <span>Share</span>
        </ShareBox>
      </TabBar>

      <Ribbon>
        <Group $w={140}>
          <GroupBody>
            <ClipBody>
              <PasteCol>
                <PasteIcon />
                <PasteRule />
                Paste
                <Caret c="#aaa" />
              </PasteCol>
              <div>
                <Tools from={61} items={[[88, 16, <ScissorsIcon />]]} />
                <Tools from={61} items={[[85, 17, <CopyIcon />], [112, 6, <Caret />]]} />
                <Tools from={61} items={[[89, 16, <PainterIcon />]]} />
              </div>
            </ClipBody>
          </GroupBody>
          <GroupFoot>
            <FootLabel>Clipboard</FootLabel>
            <FootLauncher>
              <Launcher />
            </FootLauncher>
          </GroupFoot>
        </Group>

        <Group $w={281}>
          <GroupBody>
            <ComboRow>
              <Combo $w={124}>
                Calibri
                <Chevron />
              </Combo>
              <Combo $w={48}>
                11
                <Chevron />
              </Combo>
              <Tools
                h={25}
                from={323}
                items={[
                  [345, 16, <GrowA up />],
                  [387, 16, <GrowA up={false} />],
                ]}
              />
            </ComboRow>
            <FontToolRow>
              <Tools
                from={140}
                items={[
                  [171, 14, <Glyph>B</Glyph>],
                  [215, 14, <Glyph $italic $family={`"Liberation Serif", serif`} $size={17}>I</Glyph>],
                  [255, 14, <Glyph $under>U</Glyph>],
                  [273, 6, <Caret />],
                  [298, 16, <BordersIcon />],
                  [317, 6, <Caret />],
                  [342, 19, <FillIcon />],
                  [360, 6, <Caret />],
                  [385, 16, <ColorStack><Glyph $size={16}>A</Glyph><ColorBar /></ColorStack>],
                  [403, 6, <Caret />],
                ]}
              />
            </FontToolRow>
          </GroupBody>
          <GroupFoot>
            <FootLabel>Font</FootLabel>
            <FootLauncher>
              <Launcher />
            </FootLauncher>
          </GroupFoot>
        </Group>

        <Group $w={212}>
          <GroupBody>
            <Tools
              from={421}
              items={[
                [453, 18, <Lines rows={[[2, 16, 2], [2, 16, 5]]} />],
                [496, 18, <Lines rows={[[2, 16, 6], [1, 17, 9], [2, 16, 12]]} />],
                [540, 43, <Pressed><Lines c="#777" rows={[[2, 16, 9], [1, 17, 12], [2, 16, 15]]} /></Pressed>],
                [583, 18, <WrapIcon />],
              ]}
            />
            <Tools
              from={421}
              items={[
                [453, 18, <Lines rows={[[2, 16, 4], [2, 12, 7], [2, 16, 10], [2, 12, 13]]} />],
                [496, 18, <Lines rows={[[2, 16, 4], [4, 14, 7], [2, 16, 10], [4, 14, 13]]} />],
                [539, 18, <Lines rows={[[2, 16, 4], [6, 16, 7], [2, 16, 10], [6, 16, 13]]} />],
                [579, 19, <MergeIcon />],
                [606, 6, <Caret />],
              ]}
            />
            <Tools
              from={421}
              items={[
                [453, 18, <IndentIcon out />],
                [496, 18, <IndentIcon out={false} />],
                [538, 26, <OrientIcon />],
                [554, 6, <Caret />],
              ]}
            />
          </GroupBody>
          <GroupFoot>
            <FootLabel>Alignment</FootLabel>
            <FootLauncher>
              <Launcher />
            </FootLauncher>
          </GroupFoot>
        </Group>

        <Group $w={152}>
          <GroupBody>
            <NumberTop>
              <GeneralBox $w={129}>
                General
                <Chevron />
              </GeneralBox>
            </NumberTop>
            <Tools
              from={633}
              items={[
                [662, 14, <Glyph $size={18} $bold={false}>$</Glyph>],
                [681, 6, <Caret />],
                [708, 18, <Glyph $size={17} $bold={false}>%</Glyph>],
                [751, 8, <Glyph $size={17}>,</Glyph>],
              ]}
            />
            <Tools
              from={633}
              items={[
                [661, 18, <DecimalIcon more />],
                [709, 18, <DecimalIcon more={false} />],
              ]}
            />
          </GroupBody>
          <GroupFoot>
            <FootLabel>Number</FootLabel>
            <FootLauncher>
              <Launcher />
            </FootLauncher>
          </GroupFoot>
        </Group>

        <Group $w={189}>
          <GroupBody>
            <StyleRow $left={22}>
              <CondIcon />
              Conditional Formatting
              <CaretAfter><Caret /></CaretAfter>
            </StyleRow>
            <StyleRow $left={22}>
              <TableStyleIcon />
              Format as Table
              <CaretAfter><Caret /></CaretAfter>
            </StyleRow>
            <StyleRow $left={22}>
              <TableStyleIcon head="#d4d4d4" />
              Cell Styles
              <CaretAfter><Caret /></CaretAfter>
            </StyleRow>
          </GroupBody>
          <GroupFoot>
            <FootLabel>Styles</FootLabel>
          </GroupFoot>
        </Group>

        <Group $w={122}>
          <GroupBody>
            <StyleRow $left={22} $gap={2}>
              <InsertCells />
              Insert
              <CaretAfter $gap={18}><Caret /></CaretAfter>
            </StyleRow>
            <StyleRow $left={22} $gap={2}>
              <DeleteCells />
              Delete
              <CaretAfter $gap={18}><Caret /></CaretAfter>
            </StyleRow>
            <StyleRow $left={22} $gap={5}>
              <FormatCells />
              Format
              <CaretAfter $gap={1}><Caret /></CaretAfter>
            </StyleRow>
          </GroupBody>
          <GroupFoot>
            <FootLabel>Cells</FootLabel>
          </GroupFoot>
        </Group>

        <Group $w={127}>
          <GroupBody>
            <Tools
              from={1096}
              items={[
                [1126, 15, <SumIcon />],
                [1152, 6, <Caret />],
                [1187, 20, <SortIcon />],
                [1203, 6, <Caret />],
              ]}
            />
            <Tools
              from={1096}
              items={[
                [1128, 16, <FillDownIcon />],
                [1142, 6, <Caret />],
                [1190, 18, <FindIcon />],
                [1203, 6, <Caret />],
              ]}
            />
            <Tools
              from={1096}
              items={[
                [1128, 16, <EraserIcon />],
                [1142, 6, <Caret />],
              ]}
            />
          </GroupBody>
          <GroupFoot>
            <FootLabel>Editing</FootLabel>
          </GroupFoot>
        </Group>
        <Collapse>
          <ChevronUp />
        </Collapse>
      </Ribbon>

      <FormulaRow>
        <NameBox>
          L14
          <Caret />
        </NameBox>
        <Grip>⋮</Grip>
        <FxBox>
          <span>✕</span>
          <span>✓</span>
          <FxMark>fx</FxMark>
        </FxBox>
        <FormulaInput>
          =RANK(J14,$J$4:$J$14)
          <Chevron w={9} c="#444" />
        </FormulaInput>
      </FormulaRow>

      <SheetArea>
        <SheetGrid />
        <VScroll>
          <ScrollBtn>
            <Arrow d="u" />
          </ScrollBtn>
          <VThumb />
          <VTrack />
          <ScrollBtn>
            <Arrow d="d" />
          </ScrollBtn>
        </VScroll>
        <MouseCursor>
          <PlusCursor />
        </MouseCursor>
      </SheetArea>

      <SheetTabs>
        <NavArrows>
          <Tools
            h={19}
            from={0}
            items={[
              [27, 6, <Arrow d="l" c="#c4c4c4" />],
              [53, 6, <Arrow d="r" c="#c4c4c4" />],
            ]}
          />
        </NavArrows>
        <SheetTab>Sheet1</SheetTab>
        <SheetTab $on>Sheet2</SheetTab>
        <AddSheet>
          <AddSheetIcon />
        </AddSheet>
        <SplitDots>⋮</SplitDots>
        <HScroll>
          <ScrollBtn>
            <Arrow d="l" />
          </ScrollBtn>
          <HThumb />
          <HTrack />
          <ScrollBtn>
            <Arrow d="r" />
          </ScrollBtn>
        </HScroll>
      </SheetTabs>

      <StatusBar>
        <Ready>Ready</Ready>
        <Views>
          <ViewBtn $on>
            <NormalView />
          </ViewBtn>
          <ViewBtn>
            <PageView />
          </ViewBtn>
          <ViewBtn>
            <BreakView />
          </ViewBtn>
        </Views>
        <ZoomSign $ml={1}>-</ZoomSign>
        <ZoomBar>
          <ZoomThumb />
        </ZoomBar>
        <ZoomSign>+</ZoomSign>
        <ZoomValue>140%</ZoomValue>
      </StatusBar>

      <Taskbar>
        <StartBtn>
          <WinLogo />
        </StartBtn>
        <SearchBox>
          <SearchGlass />
          Type here to search
        </SearchBox>
        <TaskBtn $w={44}>
          <CortanaIcon />
        </TaskBtn>
        <TaskBtn $w={46}>
          <TaskViewIcon />
        </TaskBtn>
        <TaskBtn $w={50}>
          <EdgeIcon />
        </TaskBtn>
        <TaskBtn $w={37} $open $ml={3}>
          <FolderIcon />
        </TaskBtn>
        <TaskBtn $w={54}>
          <StoreIcon />
        </TaskBtn>
        <TaskBtn $w={38}>
          <MailIcon />
        </TaskBtn>
        <TaskBtn $w={38} $open $ml={8}>
          <ChromeIcon />
        </TaskBtn>
        <TaskBtn $w={45} $on $open $ml={5}>
          <ExcelIcon />
        </TaskBtn>
        <Tray>
          <Tools
            h={38}
            from={0}
            items={[
              [12, 12, <TrayChevron />],
              [33, 16, <BatteryIcon />],
              [57, 13, <WifiIcon />],
              [77, 15, <VolumeIcon />],
            ]}
          />
          <Clock>
            12:02 PM
            <br />
            6/13/2020
          </Clock>
          <NoteBtn>
            <NoteIcon />
            <NoteBadge>4</NoteBadge>
          </NoteBtn>
        </Tray>
      </Taskbar>
    </Page>
  );
}
